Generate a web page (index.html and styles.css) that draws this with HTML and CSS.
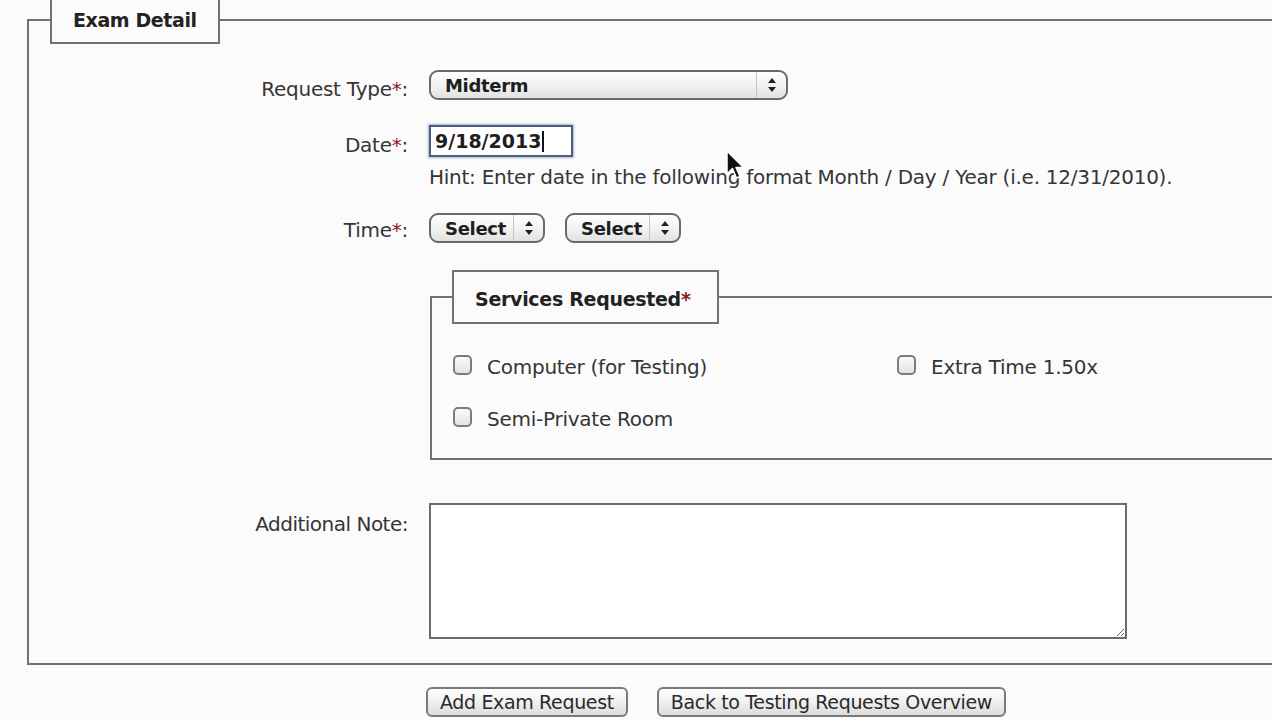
FILE: index.html
```html
<!DOCTYPE html>
<html>
<head>
<meta charset="utf-8">
<title>Exam Detail</title>
<link rel="stylesheet" href="styles.css">
</head>
<body>
<div class="page">
  <fieldset class="exam">
    <legend class="box-legend exam-legend">Exam Detail</legend>

    <div class="row row-type">
      <div class="label">Request Type<span class="req">*</span>:</div>
      <div class="control">
        <div class="select select-wide">
          <span class="select-text">Midterm</span>
          <span class="select-arrow"><svg width="10" height="16" viewBox="0 0 10 16"><path d="M5 1 L9 6 L1 6 Z M5 15 L9 10 L1 10 Z" fill="#222"/></svg></span>
        </div>
      </div>
    </div>

    <div class="row row-date">
      <div class="label">Date<span class="req">*</span>:</div>
      <div class="control">
        <div class="date-input"><span class="date-text">9/18/2013</span><span class="caret"></span></div>
        <div class="hint">Hint: Enter date in the following format Month / Day / Year (i.e. 12/31/2010).</div>
      </div>
    </div>

    <div class="row row-time">
      <div class="label">Time<span class="req">*</span>:</div>
      <div class="control time-controls">
        <div class="select select-small">
          <span class="select-text">Select</span>
          <span class="select-arrow"><svg width="10" height="16" viewBox="0 0 10 16"><path d="M5 1 L9 6 L1 6 Z M5 15 L9 10 L1 10 Z" fill="#222"/></svg></span>
        </div>
        <div class="select select-small">
          <span class="select-text">Select</span>
          <span class="select-arrow"><svg width="10" height="16" viewBox="0 0 10 16"><path d="M5 1 L9 6 L1 6 Z M5 15 L9 10 L1 10 Z" fill="#222"/></svg></span>
        </div>
      </div>
    </div>

    <div class="row row-services">
      <div class="label"></div>
      <div class="control">
        <fieldset class="services">
          <legend class="box-legend services-legend">Services Requested<span class="req">*</span></legend>
          <div class="checks">
            <label class="check"><span class="checkbox"></span><span class="check-text">Computer (for Testing)</span></label>
            <label class="check"><span class="checkbox"></span><span class="check-text">Extra Time 1.50x</span></label>
            <label class="check"><span class="checkbox"></span><span class="check-text">Semi-Private Room</span></label>
          </div>
        </fieldset>
      </div>
    </div>

    <div class="row row-note">
      <div class="label">Additional Note:</div>
      <div class="control">
        <textarea class="note"></textarea>
      </div>
    </div>
  </fieldset>

  <div class="buttons">
    <span class="btn">Add Exam Request</span>
    <span class="btn">Back to Testing Requests Overview</span>
  </div>

  <svg class="cursor" width="20" height="30" viewBox="0 0 20 30"><path d="M1 1 L1 24 L6.5 18.5 L10.5 28 L14 26.5 L10 17.5 L17.5 17.5 Z" fill="#111" stroke="#fff" stroke-width="1.5" stroke-linejoin="round"/></svg>
</div>
</body>
</html>
```

FILE: styles.css
```css
html, body {
  margin: 0;
  padding: 0;
  background: #fcfbfc;
  overflow: hidden;
}

body {
  font-family: "DejaVu Sans", Verdana, sans-serif;
  font-size: 20px;
  letter-spacing: -0.25px;
  color: #353535;
  width: 1272px;
  height: 720px;
}

.page {
  position: relative;
  width: 1272px;
  height: 720px;
}

.exam {
  margin: -5px 0 0 27px;
  padding: 0 0 24px 0;
  border: 2px solid #727272;
  width: 1300px;
  box-sizing: border-box;
}

.box-legend {
  border: 2px solid #727272;
  background: #fcfbfc;
  font-weight: bold;
  color: #222;
  box-sizing: border-box;
  white-space: nowrap;
}

.exam-legend {
  margin-left: 21px;
  padding: 0 0 0 21px;
  height: 49px;
  line-height: 46px;
  width: 170px;
  font-size: 19px;
  letter-spacing: -0.4px;
}

.req {
  color: #8a1a22;
}

.row {
  display: grid;
  grid-template-columns: 379px 1fr;
  column-gap: 21px;
}

.label {
  text-align: right;
  line-height: 22px;
}

.row-type {
  margin-top: 26px;
}
.row-type .label {
  padding-top: 8px;
}

.row-date {
  margin-top: 25px;
}
.row-date .label {
  padding-top: 9px;
}

.row-time {
  margin-top: 25px;
}
.row-time .label {
  padding-top: 6px;
}

.row-services {
  margin-top: 27px;
}

.row-note {
  margin-top: 43px;
}
.row-note .label {
  padding-top: 10px;
  padding-right: 0;
  letter-spacing: -0.5px;
}

.select {
  display: flex;
  align-items: center;
  height: 30px;
  box-sizing: border-box;
  border: 2px solid #6a6a6a;
  border-radius: 9px;
  background: linear-gradient(#ffffff, #f2f2f2 50%, #e2e2e2);
  font-weight: bold;
  color: #1e1e1e;
  font-size: 18px;
  letter-spacing: -0.3px;
}

.select-text {
  flex: 1;
  padding-left: 14px;
  white-space: nowrap;
}

.select-arrow {
  width: 29px;
  height: 100%;
  border-left: 1px solid #c4c4c4;
  display: flex;
  align-items: center;
  justify-content: center;
  flex: none;
}

.select-wide {
  width: 359px;
}

.select-small {
  width: 116px;
}

.time-controls {
  display: flex;
  gap: 20px;
}

.date-input {
  width: 144px;
  height: 32px;
  box-sizing: border-box;
  border: 2px solid #4f5d7c;
  box-shadow: 0 0 2px 1px #a9b7d3;
  background: #fff;
  display: flex;
  align-items: center;
  padding-left: 4px;
  font-weight: bold;
  color: #1e1e1e;
  font-size: 19px;
  letter-spacing: 0;
}

.caret {
  width: 1.5px;
  height: 21px;
  background: #111;
  margin-left: 1px;
}

.hint {
  margin-top: 9px;
  line-height: 22px;
  white-space: nowrap;
}

.services {
  margin: 0 0 0 1px;
  padding: 0 0 30px 0;
  border: 2px solid #727272;
  width: 900px;
  box-sizing: border-box;
}

.services-legend {
  margin-left: 20px;
  padding: 3px 0 0 21px;
  height: 54px;
  line-height: 48px;
  width: 267px;
  font-size: 19px;
  letter-spacing: -0.3px;
}

.checks {
  display: grid;
  grid-template-columns: 444px 444px;
  row-gap: 30px;
  padding: 30px 0 0 21px;
}

.check {
  display: flex;
  align-items: center;
  gap: 15px;
  height: 22px;
  line-height: 22px;
}

.check-text {
  padding-top: 4px;
  white-space: nowrap;
}

.checkbox {
  width: 19px;
  height: 20px;
  box-sizing: border-box;
  border: 2px solid #7c7c7c;
  border-radius: 5px;
  background: linear-gradient(#fafafa, #e4e4e4);
  flex: none;
}

.note {
  display: block;
  width: 698px;
  height: 136px;
  box-sizing: border-box;
  border: 2px solid #6a6a6a;
  background: #fff;
  margin: 0;
  resize: both;
}

.buttons {
  display: flex;
  gap: 29px;
  padding-left: 426px;
  margin-top: 22px;
}

.btn {
  height: 30px;
  box-sizing: border-box;
  border: 2px solid #7a7a7a;
  border-radius: 6px;
  background: linear-gradient(#ffffff, #f0f0f0 50%, #dcdcdc);
  color: #2a2a2a;
  padding: 0 12px;
  line-height: 27px;
  font-size: 19px;
  letter-spacing: -0.35px;
  white-space: nowrap;
}

.cursor {
  position: absolute;
  left: 726px;
  top: 155px;
}
```
